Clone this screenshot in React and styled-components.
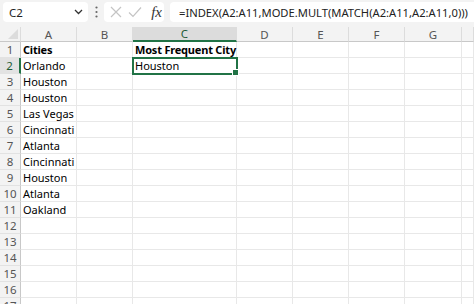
import React from "react";
import styled, { createGlobalStyle } from "styled-components";

const Global = createGlobalStyle`
  html, body { margin: 0; padding: 0; background: #ffffff; }
  body { font-family: "Noto Sans", "Open Sans", sans-serif; overflow: hidden; }
  * { box-sizing: border-box; }
`;

const Page = styled.div`
  width: 474px;
  height: 304px;
  display: flex;
  flex-direction: column;
  background: #f3f3f3;
  overflow: hidden;
`;

const Toolbar = styled.div`
  display: flex;
  align-items: center;
  height: 27px;
  padding: 2px 0 5px 3px;
  background: #f3f3f3;
`;

const NameBox = styled.div`
  width: 85px;
  height: 20px;
  flex-shrink: 0;
  display: flex;
  align-items: center;
  justify-content: space-between;
  padding: 0 5px 0 6px;
  background: #ffffff;
  border-radius: 4px;
  font-size: 11.5px;
  color: #222;
`;

const Dots = styled.div`
  width: 16px;
  flex-shrink: 0;
  display: flex;
  justify-content: center;
`;

const IconGroup = styled.div`
  width: 60px;
  height: 20px;
  flex-shrink: 0;
  display: flex;
  align-items: center;
  gap: 6px;
  padding: 0 2px 0 6px;
  background: #ffffff;
  border-radius: 4px;
  & > svg { flex-shrink: 0; }
`;

const Fx = styled.span`
  margin-left: auto;
  font-family: "Liberation Serif", "DejaVu Serif", serif;
  font-style: italic;
  font-size: 15px;
  line-height: 1;
  color: #333;
`;

const FormulaBox = styled.div`
  flex: 1;
  min-width: 0;
  height: 20px;
  margin-left: 6px;
  display: flex;
  align-items: center;
  padding-left: 9px;
  background: #ffffff;
  border-radius: 4px 0 0 4px;
  font-size: 11.2px;
  color: #222;
  white-space: nowrap;
  overflow: hidden;
`;

const Grid = styled.div`
  flex: 1;
  display: grid;
  grid-template-columns: 21px 56px 56px 104px 56px 56px 56px 57px 1fr;
  grid-auto-rows: 16px;
  grid-template-rows: 15px;
  background: #ffffff;
`;

const Corner = styled.div`
  background: #f3f3f3;
  border-right: 1px solid #dcdcdc;
  border-bottom: 1px solid #c8c8c8;
  position: relative;
  overflow: hidden;
  &::after {
    content: "";
    position: absolute;
    right: 2px;
    bottom: 2px;
    border-style: solid;
    border-width: 0 0 10px 10px;
    border-color: transparent transparent #dcdcdc transparent;
  }
`;

const ColHead = styled.div`
  background: ${(p) => (p.$active ? "#dcdcdc" : "#f3f3f3")};
  border-right: 1px solid #dcdcdc;
  border-bottom: ${(p) => (p.$active ? "2px solid #217346" : "1px solid #c8c8c8")};
  color: ${(p) => (p.$active ? "#1c5b36" : "#555")};
  font-size: 11.5px;
  display: flex;
  align-items: center;
  justify-content: center;
`;

const RowHead = styled.div`
  background: ${(p) => (p.$active ? "#e2e2e2" : "#f3f3f3")};
  border-right: ${(p) => (p.$active ? "2px solid #217346" : "1px solid #c8c8c8")};
  border-bottom: 1px solid #e2e2e2;
  color: ${(p) => (p.$active ? "#1c5b36" : "#555")};
  font-size: 11.5px;
  display: flex;
  align-items: center;
  justify-content: center;
`;

const Cell = styled.div`
  position: relative;
  border-right: 1px solid #e8e8e8;
  border-bottom: 1px solid #e8e8e8;
  padding-left: 2px;
  font-size: 11px;
  font-weight: ${(p) => (p.$bold ? 700 : 400)};
  letter-spacing: ${(p) => (p.$bold ? "-0.2px" : "0")};
  color: #000;
  white-space: nowrap;
  display: flex;
  align-items: center;
  outline: ${(p) => (p.$selected ? "2px solid #217346" : "none")};
  outline-offset: -1px;
  z-index: ${(p) => (p.$selected ? 1 : 0)};
  &::after {
    content: "";
    display: ${(p) => (p.$selected ? "block" : "none")};
    position: absolute;
    right: -3px;
    bottom: -3px;
    width: 5px;
    height: 5px;
    background: #217346;
    border: 1px solid #ffffff;
  }
`;

const cols = ["A", "B", "C", "D", "E", "F", "G", ""];
const cities = [
  "Cities",
  "Orlando",
  "Houston",
  "Houston",
  "Las Vegas",
  "Cincinnati",
  "Atlanta",
  "Cincinnati",
  "Houston",
  "Atlanta",
  "Oakland",
];

export default function App() {
  const rows = Array.from({ length: 17 }, (_, i) => i + 1);
  return (
    <Page>
      <Global />
      <Toolbar>
        <NameBox>
          <span>C2</span>
          <svg width="9" height="6" viewBox="0 0 9 6">
            <path d="M1 1 L4.5 4.5 L8 1" fill="none" stroke="#333" strokeWidth="1.3" />
          </svg>
        </NameBox>
        <Dots>
          <svg width="3" height="12" viewBox="0 0 3 12">
            <circle cx="1.5" cy="1.5" r="1.1" fill="#666" />
            <circle cx="1.5" cy="6" r="1.1" fill="#666" />
            <circle cx="1.5" cy="10.5" r="1.1" fill="#666" />
          </svg>
        </Dots>
        <IconGroup>
          <svg width="12" height="12" viewBox="0 0 12 12">
            <path d="M1 1 L11 11 M11 1 L1 11" stroke="#c4c4c4" strokeWidth="1.2" />
          </svg>
          <svg width="14" height="12" viewBox="0 0 14 12">
            <path d="M1 6.5 L5 10.5 L13 1.5" fill="none" stroke="#c4c4c4" strokeWidth="1.2" />
          </svg>
          <Fx>fx</Fx>
        </IconGroup>
        <FormulaBox>=INDEX(A2:A11,MODE.MULT(MATCH(A2:A11,A2:A11,0)))</FormulaBox>
      </Toolbar>
      <Grid>
        <Corner />
        {cols.map((c, i) => (
          <ColHead key={i} $active={c === "C"}>{c}</ColHead>
        ))}
        {rows.map((r) => (
          <React.Fragment key={r}>
            <RowHead $active={r === 2}>{r}</RowHead>
            {cols.map((c, i) => {
              let text = "";
              if (i === 0 && r <= 11) text = cities[r - 1];
              if (c === "C" && r === 1) text = "Most Frequent City";
              if (c === "C" && r === 2) text = "Houston";
              return (
                <Cell key={i} $bold={r === 1} $selected={c === "C" && r === 2}>
                  {text}
                </Cell>
              );
            })}
          </React.Fragment>
        ))}
      </Grid>
    </Page>
  );
}
